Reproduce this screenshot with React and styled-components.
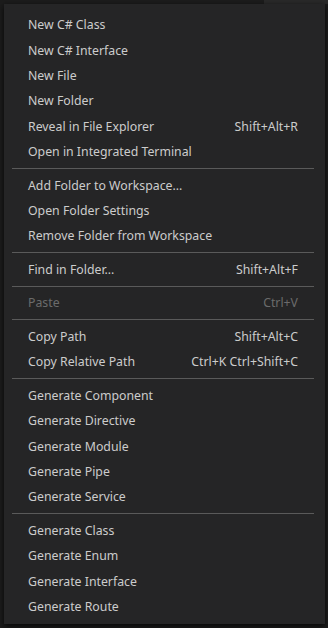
import React from 'react'
import styled, { createGlobalStyle } from 'styled-components'

const Global = createGlobalStyle`
  html, body {
    margin: 0;
    padding: 0;
    background: #1c1c1c;
  }
  body {
    font-family: "Noto Sans", "Open Sans", sans-serif;
  }
`

const Page = styled.div`
  width: 328px;
  height: 628px;
  padding: 4px 3px 4px 4px;
  box-sizing: border-box;
  background: linear-gradient(to right, #1c1c1c 264px, #2a2a2a 264px) top / 100% 4px no-repeat;
`

const Menu = styled.ul`
  list-style: none;
  margin: 0;
  padding: 8px 0 4px;
  height: 620px;
  box-sizing: border-box;
  background: #252526;
  box-shadow: 0 2px 6px rgba(0, 0, 0, 0.8);
  color: #cccccc;
  font-size: 12.3px;
`

const Item = styled.li`
  display: flex;
  align-items: center;
  justify-content: space-between;
  height: 25.4px;
  padding: 0 27px 0 24px;
  color: ${p => (p.disabled ? '#6b6b6b' : '#cccccc')};
  white-space: nowrap;
`

const Key = styled.span`
  margin-left: 20px;
`

const Separator = styled.li`
  height: 8.1px;
  display: flex;
  align-items: center;
  padding: 0 11px 0 8px;
  &::after {
    content: '';
    flex: 1;
    height: 1px;
    background: #5a5a5a;
  }
`

const groups = [
  [
    ['New C# Class'],
    ['New C# Interface'],
    ['New File'],
    ['New Folder'],
    ['Reveal in File Explorer', 'Shift+Alt+R'],
    ['Open in Integrated Terminal'],
  ],
  [['Add Folder to Workspace...'], ['Open Folder Settings'], ['Remove Folder from Workspace']],
  [['Find in Folder...', 'Shift+Alt+F']],
  [['Paste', 'Ctrl+V', true]],
  [
    ['Copy Path', 'Shift+Alt+C'],
    ['Copy Relative Path', 'Ctrl+K Ctrl+Shift+C'],
  ],
  [
    ['Generate Component'],
    ['Generate Directive'],
    ['Generate Module'],
    ['Generate Pipe'],
    ['Generate Service'],
  ],
  [['Generate Class'], ['Generate Enum'], ['Generate Interface'], ['Generate Route']],
]

export default function App() {
  return (
    <Page>
      <Global />
      <Menu>
        {groups.map((group, gi) => (
          <React.Fragment key={gi}>
            {gi > 0 && <Separator />}
            {group.map(([label, key, disabled]) => (
              <Item key={label} disabled={disabled}>
                <span>{label}</span>
                {key && <Key>{key}</Key>}
              </Item>
            ))}
          </React.Fragment>
        ))}
      </Menu>
    </Page>
  )
}
